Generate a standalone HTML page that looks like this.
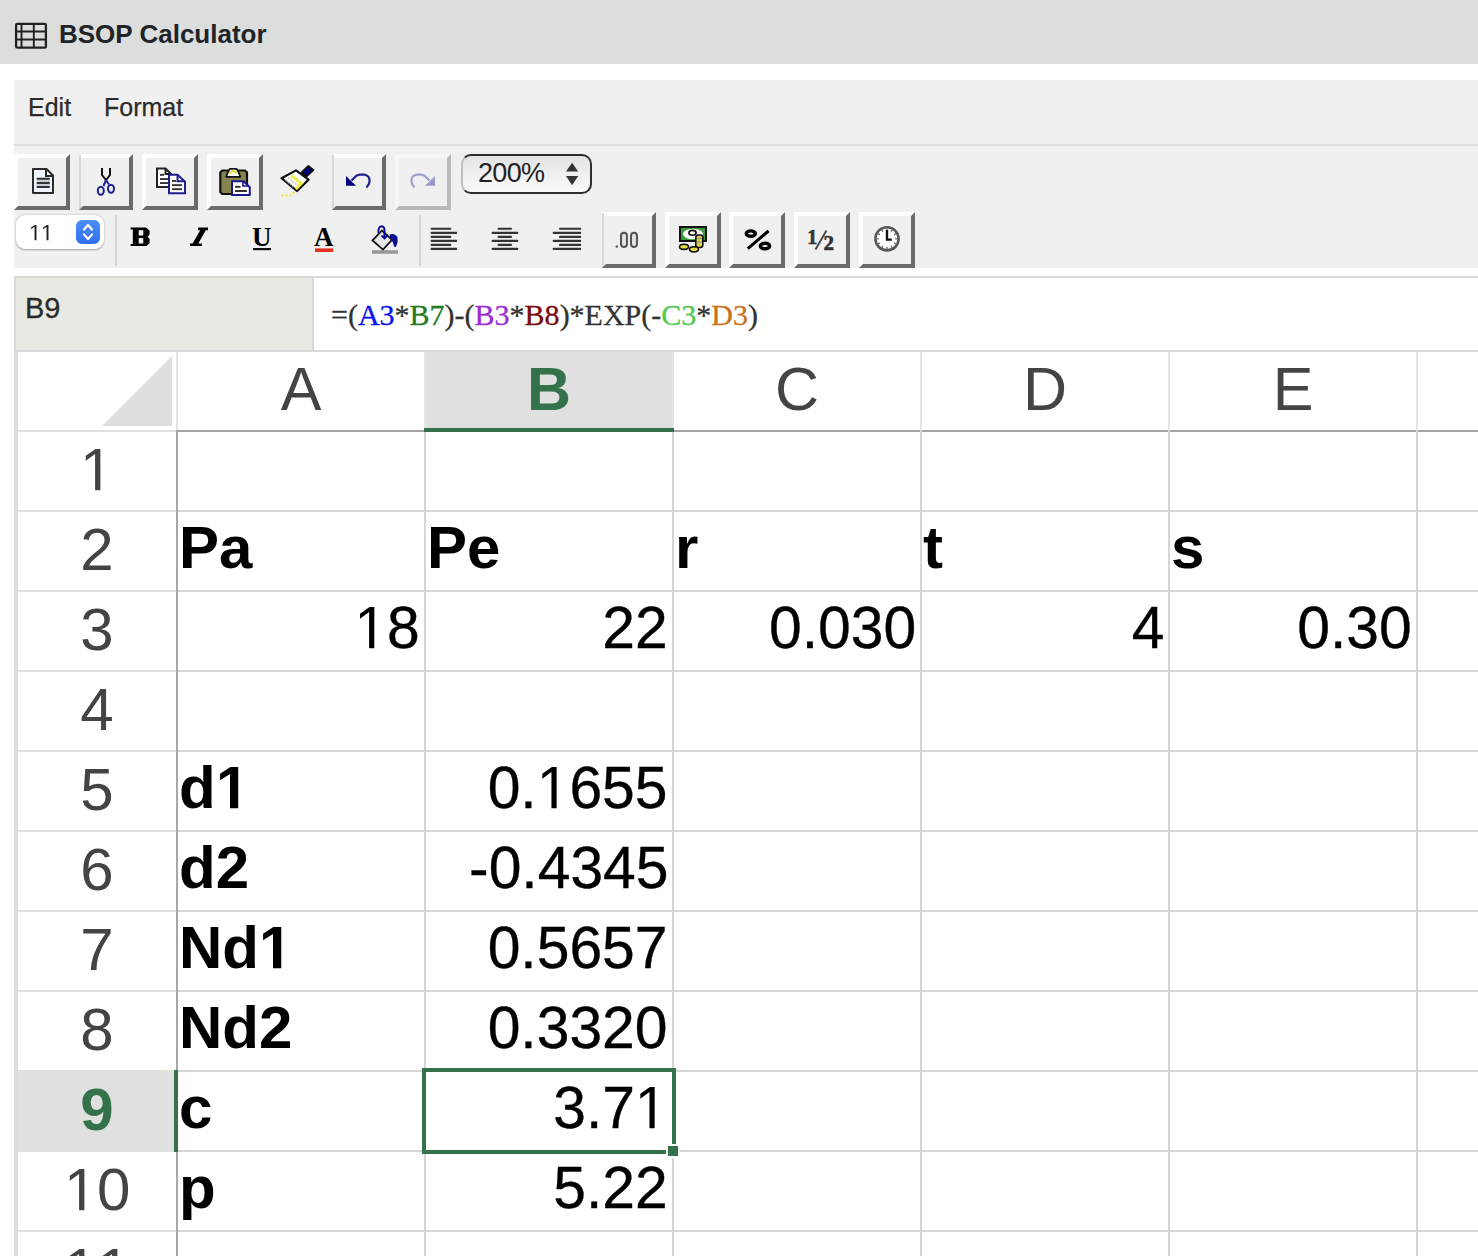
<!DOCTYPE html>
<html><head><meta charset="utf-8">
<style>
*{box-sizing:border-box;margin:0;padding:0}
html,body{width:1478px;height:1256px;overflow:hidden;background:#fff;font-family:"Liberation Sans",sans-serif;position:relative}
.abs{position:absolute}
svg.one{width:0.5562em;height:0.688em;vertical-align:baseline;fill:currentColor;overflow:visible}
#title{left:0;top:0;width:1478px;height:64px;background:#dcdedd}
#title .t{left:59px;top:19px;font-weight:bold;font-size:26px;color:#202327;white-space:nowrap;line-height:30px}
#menu{left:14px;top:80px;width:1464px;height:64px;background:#f0f0f0}
#menu .m{top:91px;font-size:25px;color:#2b2b2b;line-height:30px}
#menuline{left:14px;top:144px;width:1464px;height:2px;background:#dcdcdc}
#tool{left:14px;top:146px;width:1464px;height:122px;background:#f0f0f0}
.btn{position:absolute;width:56px;height:56px;border-style:solid;border-width:4px;border-color:#fff #6b6b6b #6b6b6b #fff;background:#f0f0f0}
.btn.dis{border-color:#fafafa #bdbdbd #bdbdbd #fafafa}
.sep{position:absolute;width:2px;background:#d6d6d6}
#fbar{left:14px;top:276px;width:1464px;height:76px;border:2px solid #d9d9d9;border-right:none;background:#fff}
#namebox{left:16px;top:278px;width:296px;height:72px;background:#e9e9e4}
#nameline{left:312px;top:278px;width:2px;height:72px;background:#d9d9d9}
.grid-h{position:absolute;height:2px}
.grid-v{position:absolute;width:2px}
.rl{position:absolute;left:18px;width:158px;height:78px;text-align:center;font-size:60px;color:#444;line-height:75px}
.cl{position:absolute;top:352px;height:78px;width:246px;text-align:center;font-size:61px;color:#444;line-height:74px}
.c{position:absolute;height:78px;width:246px;font-size:60px;color:#000;line-height:72px;white-space:nowrap;overflow:hidden}
.c span{display:inline-block}
.c.r{text-align:right;padding-right:4px}
.c.r span{transform:scaleX(0.98);transform-origin:100% 50%;-webkit-text-stroke:0.35px #000}
.c.b{font-weight:bold;padding-left:1px}
.c.b span{transform:none}
</style></head><body>
<div id="title" class="abs">
  <svg class="abs" style="left:14px;top:22px" width="34" height="28" viewBox="14 22 34 28">
    <rect x="16.1" y="23.8" width="29.8" height="23.8" rx="1.2" fill="none" stroke="#222" stroke-width="2.3"/>
    <path d="M21.5 24v23M33.8 24v23M16 31.5h30M16 39.5h30" stroke="#222" stroke-width="1.9" fill="none"/>
  </svg>
  <div class="abs t">BSOP Calculator</div>
</div>
<div id="menu" class="abs"></div>
<div class="abs m" style="left:28px;top:92px;font-size:25px;color:#2b2b2b;line-height:30px;-webkit-text-stroke:0.25px #2b2b2b">Edit</div>
<div class="abs m" style="left:104px;top:92px;font-size:25px;color:#2b2b2b;line-height:30px;-webkit-text-stroke:0.25px #2b2b2b">Format</div>
<div id="menuline" class="abs"></div>
<div id="tool" class="abs"></div>

<!-- toolbar -->
<svg class="abs" style="left:0;top:146px" width="1000" height="122" viewBox="0 146 1000 122">
<defs>
 <linearGradient id="bk" x1="0" y1="0" x2="1" y2="1"><stop offset="0" stop-color="#ffffff"/><stop offset="1" stop-color="#b8b8b8"/></linearGradient>
</defs>
<g id="btns">
<polygon points="14,154 70,154 66,158 18,158 18,206 14,210" fill="#ffffff"/>
<polygon points="70,154 70,210 14,210 18,206 66,206 66,158" fill="#6b6b6b"/>
<polygon points="79,154 133,154 129,158 81,158" fill="#ffffff"/>
<rect x="79" y="155" width="2" height="55" fill="#d8d8d8"/>
<polygon points="133,154 133,210 79,210 83,206 129,206 129,158" fill="#6b6b6b"/>
<polygon points="142,154 198,154 194,158 146,158 146,206 142,210" fill="#ffffff"/>
<polygon points="198,154 198,210 142,210 146,206 194,206 194,158" fill="#6b6b6b"/>
<polygon points="207,154 263,154 259,158 211,158 211,206 207,210" fill="#ffffff"/>
<polygon points="263,154 263,210 207,210 211,206 259,206 259,158" fill="#6b6b6b"/>
<polygon points="332,154 386,154 382,158 334,158" fill="#ffffff"/>
<rect x="332" y="155" width="2" height="55" fill="#d8d8d8"/>
<polygon points="386,154 386,210 332,210 336,206 382,206 382,158" fill="#6b6b6b"/>
<polygon points="395,154 451,154 447,158 399,158 399,206 395,210" fill="#f7f7f7"/>
<polygon points="451,154 451,210 395,210 399,206 447,206 447,158" fill="#b9b9b9"/>
<polygon points="602,212 656,212 652,216 604,216" fill="#ffffff"/>
<rect x="602" y="213" width="2" height="55" fill="#d8d8d8"/>
<polygon points="656,212 656,268 602,268 606,264 652,264 652,216" fill="#6b6b6b"/>
<polygon points="665,212 721,212 717,216 669,216 669,264 665,268" fill="#ffffff"/>
<polygon points="721,212 721,268 665,268 669,264 717,264 717,216" fill="#6b6b6b"/>
<polygon points="729,212 785,212 781,216 733,216 733,264 729,268" fill="#ffffff"/>
<polygon points="785,212 785,268 729,268 733,264 781,264 781,216" fill="#6b6b6b"/>
<polygon points="794,212 850,212 846,216 798,216 798,264 794,268" fill="#ffffff"/>
<polygon points="850,212 850,268 794,268 798,264 846,264 846,216" fill="#6b6b6b"/>
<polygon points="859,212 915,212 911,216 863,216 863,264 859,268" fill="#ffffff"/>
<polygon points="915,212 915,268 859,268 863,264 911,264 911,216" fill="#6b6b6b"/>
</g>
<!-- new doc -->
<path d="M33 169 H46.5 L53 175.5 V193 H33 Z" fill="#eef4fc" stroke="#2a2a2a" stroke-width="2" stroke-linejoin="round"/>
<path d="M46 169 V176 H53" fill="none" stroke="#2a2a2a" stroke-width="2"/>
<rect x="36.5" y="178" width="13.5" height="10" fill="#c8ced8"/>
<rect x="36.5" y="177.8" width="13.5" height="2" rx="1" fill="#333"/>
<rect x="36.5" y="181.9" width="13.5" height="2" rx="1" fill="#333"/>
<rect x="36.5" y="185.9" width="13.5" height="2" rx="1" fill="#333"/>
<!-- scissors -->
<path d="M102 168 V175 L106 180 L110 175 V168" fill="none" stroke="#111" stroke-width="2"/>
<path d="M106 180 L103.5 186 M106 180 L109 184.5" fill="none" stroke="#1e1e8f" stroke-width="2"/>
<ellipse cx="100.8" cy="190.8" rx="3" ry="4" fill="none" stroke="#1e1e8f" stroke-width="2"/>
<ellipse cx="111" cy="188.7" rx="3" ry="4" fill="none" stroke="#1e1e8f" stroke-width="2"/>
<!-- copy -->
<path d="M157 168.6 H165.5 L171 174 V187 H157 Z" fill="#fff" stroke="#222" stroke-width="2"/>
<path d="M165.5 168.6 V174 H171" fill="none" stroke="#222" stroke-width="2"/>
<rect x="160" y="173.9" width="4" height="1.9" fill="#333"/>
<rect x="160" y="178.1" width="8" height="1.9" fill="#333"/>
<rect x="160" y="182.1" width="8" height="1.9" fill="#333"/>
<path d="M169 174.8 H177.5 L185 181.8 V193.3 H169 Z" fill="#fff" stroke="#1e1e8f" stroke-width="2"/>
<path d="M177.5 174.8 V181.2 H185" fill="none" stroke="#1e1e8f" stroke-width="2"/>
<rect x="172" y="180" width="4" height="1.9" fill="#333"/>
<rect x="172" y="184.2" width="10" height="1.9" fill="#333"/>
<rect x="172" y="188.2" width="10" height="1.9" fill="#333"/>
<!-- paste -->
<path d="M222.3 170.5 H245 L247 172.5 V192 L245 194 H222.3 L220.3 192 V172.5 Z" fill="#86834f" stroke="#111" stroke-width="2.2"/>
<path d="M226.2 176.8 H240.3 L238.6 172.2 L236.6 168.9 H229.8 L227.9 172.2 Z" fill="#fff" stroke="#111" stroke-width="1.8" stroke-linejoin="round"/>
<path d="M229.8 173.6 L233.2 170.6 L236.6 173.6" fill="none" stroke="#e4dc30" stroke-width="2"/>


<path d="M232 181.3 H243.5 L249.8 187.3 V195 H232 Z" fill="#fff" stroke="#1a1a8c" stroke-width="2" stroke-linejoin="round"/>
<path d="M243 181.5 V186 H248" fill="none" stroke="#1a1a8c" stroke-width="1.6"/>
<rect x="235" y="185.8" width="5.5" height="2" fill="#333"/>
<rect x="235" y="190" width="12" height="2" fill="#333"/>
<!-- paintbrush -->
<polygon points="301.6,172.3 308.4,166 313.4,170 306.3,176.6" fill="#00007f" stroke="#111" stroke-width="1.8" stroke-linejoin="round"/>
<polygon points="281.5,178.2 296,170.4 308.6,179.6 297,191" fill="#fff" stroke="#111" stroke-width="2.2" stroke-linejoin="round"/>
<path d="M291.3 175.6 L301.2 183.4 L295.8 188.8" fill="none" stroke="#f0ee50" stroke-width="3.2"/>
<path d="M285.5 180.2 L294.5 187.8 M288.2 177.8 L297.2 185.2" stroke="#a8a8a8" stroke-width="1.3" stroke-dasharray="1.6 1.4"/>
<path d="M281.5 195.3 H291 L294.5 192" fill="none" stroke="#f0ec40" stroke-width="2.2" stroke-dasharray="2 2"/>
<!-- undo -->
<path d="M346 176 V185.7 H356 Z" fill="#00007f"/>
<path d="M351.5 180.5 L354.5 177.5 Q356.5 175 359.5 174.7 H365 Q369.3 176 369.5 180 V182 Q369 185 366.5 187.5" fill="none" stroke="#22228f" stroke-width="2.2"/>
<!-- redo -->
<g transform="translate(781 0) scale(-1 1)">
<path d="M346 176 V185.7 H356 Z" fill="#9898cc"/>
<path d="M351.5 180.5 L354.5 177.5 Q356.5 175 359.5 174.7 H365 Q369.3 176 369.5 180 V182 Q369 185 366.5 187.5" fill="none" stroke="#a0a0d0" stroke-width="2.2"/>
</g>
<!-- separators -->
<rect x="115" y="215" width="2" height="51" fill="#d4d4d4"/>
<rect x="419" y="215" width="2" height="51" fill="#d4d4d4"/>
<!-- B I U A -->
<path fill-rule="evenodd" fill="#000" d="M130.6 227.5 H146 L149.6 230.8 V234.6 L147.6 236.8 L149.6 239 V243 L146.6 246.1 H130.6 V244 H132.8 V229.6 H130.6 Z M138.7 230.3 H143.3 V235.6 H138.7 Z M138.7 238 H143.3 V243.5 H138.7 Z"/>
<path fill="#000" d="M198.2 227.6 H208 V230.2 H205.8 L198.3 243.6 H201.8 V246 H190 V243.6 H192.6 L200.2 230.2 H198.2 Z"/>
<text x="252" y="246" font-family="Liberation Serif" font-weight="bold" font-size="27" fill="#000">U</text>
<rect x="253" y="248" width="18" height="2.2" fill="#111"/>
<text x="314" y="246" font-family="Liberation Serif" font-weight="bold" font-size="27" fill="#000">A</text>
<rect x="315" y="248.4" width="18.2" height="3.6" fill="#e53020"/>
<!-- bucket -->
<rect x="372" y="250.2" width="26" height="3.6" fill="#9a9a9a"/>
<path d="M372.5 240.4 L382 230.5 L392 239.8 L383 249.6 Z" fill="#e8e8e8" stroke="#111" stroke-width="1.8"/>
<path d="M378.5 233 Q378 226.5 381.5 226.3 Q385 226.5 384.5 232 V238" fill="none" stroke="#0a0a90" stroke-width="2"/>
<path d="M381.5 235.5 L384.5 238.5 L387.5 235.5" fill="none" stroke="#0a0a90" stroke-width="1.8"/>
<path d="M389.5 234.5 Q395 233 397.5 237 Q398.5 242 396 247 L394 246.5 Q393 241 390.5 239 Z" fill="#0a0a90"/>
<!-- align -->
<g stroke="#333" stroke-width="2.1" stroke-linecap="round">
<path d="M431.6 228.8 H450.3 M431.6 232.9 H456.2 M431.6 236.9 H450.3 M431.6 240.9 H456.2 M431.6 244.9 H450.3 M431.6 248.9 H456.2"/>
<path d="M498.6 228.8 H511 M492.6 232.9 H517.3 M498.6 236.9 H511 M492.6 240.9 H517.3 M498.6 244.9 H511 M492.6 248.9 H517.3"/>
<path d="M560 228.8 H580.2 M553.7 232.9 H580.2 M560 236.9 H580.2 M553.7 240.9 H580.2 M560 244.9 H580.2 M553.7 248.9 H580.2"/>
</g>
<!-- .00 -->
<circle cx="616.8" cy="246.6" r="1.3" fill="#666"/>
<rect x="621" y="232.7" width="6" height="14.3" rx="3" fill="#e2e2dc" stroke="#555" stroke-width="2"/>
<rect x="631" y="232.7" width="6" height="14.3" rx="3" fill="#e2e2dc" stroke="#555" stroke-width="2"/>
<!-- money -->
<rect x="680" y="227" width="26" height="14" fill="#3a9a3a" stroke="#111" stroke-width="2"/>
<ellipse cx="693" cy="234" rx="10" ry="5.2" fill="#fff"/>
<ellipse cx="692.5" cy="232.8" rx="3.6" ry="2.4" fill="none" stroke="#111" stroke-width="1.6"/>
<rect x="695.8" y="235" width="7" height="12.5" rx="2.5" fill="#d8d050" stroke="#111" stroke-width="1.6"/>
<path d="M697 238.5 H701.5 M697 242 H701.5" stroke="#888" stroke-width="1.2"/>
<ellipse cx="684" cy="246.8" rx="4.5" ry="2.6" fill="#e4dc40" stroke="#111" stroke-width="1.6"/>
<ellipse cx="694" cy="249.3" rx="4.5" ry="2.6" fill="#e4dc40" stroke="#111" stroke-width="1.6"/>
<!-- percent -->
<ellipse cx="750.8" cy="233.6" rx="4.6" ry="2.7" fill="none" stroke="#000" stroke-width="3.4"/>
<ellipse cx="765" cy="246" rx="4.6" ry="2.7" fill="none" stroke="#000" stroke-width="3.4"/>
<path d="M747.8 248.6 L768.6 230.8" stroke="#000" stroke-width="3"/>
<!-- half -->
<text x="807.2" y="244.3" font-family="Liberation Serif" font-weight="bold" font-size="20" fill="#333" stroke="#333" stroke-width="0.6">1</text>
<path d="M815.5 249.5 L826.5 230.5" stroke="#444" stroke-width="1.9"/>
<text x="823.6" y="250.2" font-family="Liberation Serif" font-weight="bold" font-size="21" fill="#333" stroke="#333" stroke-width="0.6">2</text>
<!-- clock -->
<circle cx="887" cy="238.8" r="11.6" fill="#fff" stroke="#585858" stroke-width="2.6"/>
<path d="M895.20 238.80 L897.20 238.80 M894.10 242.90 L895.83 243.90 M891.10 245.90 L892.10 247.63 M887.00 247.00 L887.00 249.00 M882.90 245.90 L881.90 247.63 M879.90 242.90 L878.17 243.90 M878.80 238.80 L876.80 238.80 M879.90 234.70 L878.17 233.70 M882.90 231.70 L881.90 229.97 M887.00 230.60 L887.00 228.60 M891.10 231.70 L892.10 229.97 M894.10 234.70 L895.83 233.70 " stroke="#777" stroke-width="1.6"/>
<path d="M887 230 V239.6 H891.8" fill="none" stroke="#111" stroke-width="2.4"/>
</svg>
<!-- zoom select -->
<div class="abs" style="left:461px;top:154px;width:131px;height:40px;border-radius:10px;border:2px solid #2e2e2e;border-left-color:#bdbdbd;background:linear-gradient(#e4e4e4,#f0f0f0 55%,#fafafa)"></div>
<div class="abs" style="left:478px;top:158px;font-size:27px;line-height:30px;color:#222;white-space:nowrap;letter-spacing:-0.7px">200%</div>
<svg class="abs" style="left:560px;top:158px" width="24" height="32" viewBox="560 158 24 32"><path d="M566 171.5 L572.1 162.7 L578.2 171.5 Z M566 176 L572.1 185.3 L578.2 176 Z" fill="#333"/></svg>
<!-- font size select -->
<div class="abs" style="left:16px;top:215px;width:88px;height:34px;border-radius:9px;background:#fff;box-shadow:0 0.5px 2px rgba(0,0,0,.35)"></div>
<div class="abs" style="left:29px;top:220px;font-size:22px;line-height:26px;color:#222;-webkit-text-stroke:0.3px #222"><svg class="one" viewBox="0 0 1139 1409"><path transform="matrix(1 0 0 -1 0 1409)" d="M515 0V1237L197 1010V1180L530 1409H696V0Z"/></svg><svg class="one" viewBox="0 0 1139 1409"><path transform="matrix(1 0 0 -1 0 1409)" d="M515 0V1237L197 1010V1180L530 1409H696V0Z"/></svg></div>
<div class="abs" style="left:76px;top:220px;width:24px;height:24px;border-radius:6px;background:linear-gradient(#4b8ff6,#2f6ef0)"></div>
<svg class="abs" style="left:76px;top:220px" width="24" height="24" viewBox="76 220 24 24"><path d="M84 229.5 L88 225 L92 229.5 M84 234.5 L88 239 L92 234.5" fill="none" stroke="#fff" stroke-width="2.2" stroke-linecap="round" stroke-linejoin="round"/></svg>

<!-- formula bar -->
<div id="fbar" class="abs"></div>
<div id="namebox" class="abs"></div>
<div id="nameline" class="abs"></div>
<div class="abs" style="left:25px;top:292px;font-size:29px;color:#2b2b2b;line-height:32px;-webkit-text-stroke:0.3px #2b2b2b">B9</div>
<div id="formula" class="abs" style="left:331px;top:298px;font-family:'Liberation Serif',serif;font-size:30px;line-height:34px;color:#333;white-space:nowrap;-webkit-text-stroke:0.3px currentColor">=(<span style="color:#0a14f0">A3</span>*<span style="color:#257a1e">B7</span>)-(<span style="color:#9a2ed0">B3</span>*<span style="color:#780c0c">B8</span>)*EXP(-<span style="color:#4ec94e">C3</span>*<span style="color:#c8721e">D3</span>)</div>

<!-- grid -->
<div class="abs" style="left:14px;top:352px;width:4px;height:904px;background:#dcdcdc"></div>
<!-- selected header B -->
<div class="abs" style="left:424px;top:352px;width:250px;height:80px;background:#e0e0e0"></div>
<div class="abs" style="left:424px;top:428px;width:250px;height:4px;background:#33724a;z-index:2"></div>
<!-- selected row 9 header -->
<div class="abs" style="left:18px;top:1072px;width:158px;height:78px;background:#e0e0e0"></div>

<!-- corner triangle -->
<svg class="abs" style="left:102px;top:356px" width="70" height="70"><path d="M70 0V70H0Z" fill="#dedede"/></svg>

<div id="lines">
<div class="grid-h" style="left:18px;top:430px;width:158px;background:#dde2dc"></div>
<div class="grid-h" style="left:176px;top:430px;width:1302px;background:#a3a3a3"></div>
<div class="grid-h" style="left:18px;top:510px;width:158px;background:#dde2dc"></div>
<div class="grid-h" style="left:176px;top:510px;width:1302px;background:#d5d5d5"></div>
<div class="grid-h" style="left:18px;top:590px;width:158px;background:#dde2dc"></div>
<div class="grid-h" style="left:176px;top:590px;width:1302px;background:#d5d5d5"></div>
<div class="grid-h" style="left:18px;top:670px;width:158px;background:#dde2dc"></div>
<div class="grid-h" style="left:176px;top:670px;width:1302px;background:#d5d5d5"></div>
<div class="grid-h" style="left:18px;top:750px;width:158px;background:#dde2dc"></div>
<div class="grid-h" style="left:176px;top:750px;width:1302px;background:#d5d5d5"></div>
<div class="grid-h" style="left:18px;top:830px;width:158px;background:#dde2dc"></div>
<div class="grid-h" style="left:176px;top:830px;width:1302px;background:#d5d5d5"></div>
<div class="grid-h" style="left:18px;top:910px;width:158px;background:#dde2dc"></div>
<div class="grid-h" style="left:176px;top:910px;width:1302px;background:#d5d5d5"></div>
<div class="grid-h" style="left:18px;top:990px;width:158px;background:#dde2dc"></div>
<div class="grid-h" style="left:176px;top:990px;width:1302px;background:#d5d5d5"></div>
<div class="grid-h" style="left:18px;top:1070px;width:158px;background:#dde2dc"></div>
<div class="grid-h" style="left:176px;top:1070px;width:1302px;background:#d5d5d5"></div>
<div class="grid-h" style="left:18px;top:1150px;width:158px;background:#dde2dc"></div>
<div class="grid-h" style="left:176px;top:1150px;width:1302px;background:#d5d5d5"></div>
<div class="grid-h" style="left:18px;top:1230px;width:158px;background:#dde2dc"></div>
<div class="grid-h" style="left:176px;top:1230px;width:1302px;background:#d5d5d5"></div>
<div class="grid-v" style="left:176px;top:352px;height:78px;background:#e3e7e3"></div>
<div class="grid-v" style="left:176px;top:430px;height:826px;background:#a8a8a8"></div>
<div class="grid-v" style="left:424px;top:352px;height:78px;background:#e3e7e3"></div>
<div class="grid-v" style="left:424px;top:430px;height:826px;background:#d5d5d5"></div>
<div class="grid-v" style="left:672px;top:352px;height:78px;background:#e3e7e3"></div>
<div class="grid-v" style="left:672px;top:430px;height:826px;background:#d5d5d5"></div>
<div class="grid-v" style="left:920px;top:352px;height:78px;background:#e3e7e3"></div>
<div class="grid-v" style="left:920px;top:430px;height:826px;background:#d5d5d5"></div>
<div class="grid-v" style="left:1168px;top:352px;height:78px;background:#e3e7e3"></div>
<div class="grid-v" style="left:1168px;top:430px;height:826px;background:#d5d5d5"></div>
<div class="grid-v" style="left:1416px;top:352px;height:78px;background:#e3e7e3"></div>
<div class="grid-v" style="left:1416px;top:430px;height:826px;background:#d5d5d5"></div>
<div class="cl" style="left:178px;">A</div>
<div class="cl" style="left:426px;color:#33724a;font-weight:bold;">B</div>
<div class="cl" style="left:674px;">C</div>
<div class="cl" style="left:922px;">D</div>
<div class="cl" style="left:1170px;">E</div>
<div class="cl" style="left:1418px;">F</div>
<div class="rl" style="top:432px;"><svg class="one" viewBox="0 0 1139 1409"><path transform="matrix(1 0 0 -1 0 1409)" d="M515 0V1237L197 1010V1180L530 1409H696V0Z"/></svg></div>
<div class="rl" style="top:512px;">2</div>
<div class="rl" style="top:592px;">3</div>
<div class="rl" style="top:672px;">4</div>
<div class="rl" style="top:752px;">5</div>
<div class="rl" style="top:832px;">6</div>
<div class="rl" style="top:912px;">7</div>
<div class="rl" style="top:992px;">8</div>
<div class="rl" style="top:1072px;color:#33724a;font-weight:bold;">9</div>
<div class="rl" style="top:1152px;"><svg class="one" viewBox="0 0 1139 1409"><path transform="matrix(1 0 0 -1 0 1409)" d="M515 0V1237L197 1010V1180L530 1409H696V0Z"/></svg>0</div>
<div class="rl" style="top:1232px;"><svg class="one" viewBox="0 0 1139 1409"><path transform="matrix(1 0 0 -1 0 1409)" d="M515 0V1237L197 1010V1180L530 1409H696V0Z"/></svg><svg class="one" viewBox="0 0 1139 1409"><path transform="matrix(1 0 0 -1 0 1409)" d="M515 0V1237L197 1010V1180L530 1409H696V0Z"/></svg></div>
<div class="c b" style="left:178px;top:512px"><span>Pa</span></div>
<div class="c b" style="left:426px;top:512px"><span>Pe</span></div>
<div class="c b" style="left:674px;top:512px"><span>r</span></div>
<div class="c b" style="left:922px;top:512px"><span>t</span></div>
<div class="c b" style="left:1170px;top:512px"><span>s</span></div>
<div class="c r" style="left:178px;top:592px"><span><svg class="one" viewBox="0 0 1139 1409"><path transform="matrix(1 0 0 -1 0 1409)" d="M515 0V1237L197 1010V1180L530 1409H696V0Z"/></svg>8</span></div>
<div class="c r" style="left:426px;top:592px"><span>22</span></div>
<div class="c r" style="left:674px;top:592px"><span>0.030</span></div>
<div class="c r" style="left:922px;top:592px"><span>4</span></div>
<div class="c r" style="left:1170px;top:592px"><span>0.30</span></div>
<div class="c b" style="left:178px;top:752px"><span>d<svg class="one" viewBox="0 0 1139 1409"><path transform="matrix(1 0 0 -1 0 1409)" d="M478 0V1170L140 959V1180L493 1409H759V0Z"/></svg></span></div>
<div class="c r" style="left:426px;top:752px"><span>0.<svg class="one" viewBox="0 0 1139 1409"><path transform="matrix(1 0 0 -1 0 1409)" d="M515 0V1237L197 1010V1180L530 1409H696V0Z"/></svg>655</span></div>
<div class="c b" style="left:178px;top:832px"><span>d2</span></div>
<div class="c r" style="left:426px;top:832px"><span>-0.4345</span></div>
<div class="c b" style="left:178px;top:912px"><span>Nd<svg class="one" viewBox="0 0 1139 1409"><path transform="matrix(1 0 0 -1 0 1409)" d="M478 0V1170L140 959V1180L493 1409H759V0Z"/></svg></span></div>
<div class="c r" style="left:426px;top:912px"><span>0.5657</span></div>
<div class="c b" style="left:178px;top:992px"><span>Nd2</span></div>
<div class="c r" style="left:426px;top:992px"><span>0.3320</span></div>
<div class="c b" style="left:178px;top:1072px"><span>c</span></div>
<div class="c r" style="left:426px;top:1072px"><span>3.7<svg class="one" viewBox="0 0 1139 1409"><path transform="matrix(1 0 0 -1 0 1409)" d="M515 0V1237L197 1010V1180L530 1409H696V0Z"/></svg></span></div>
<div class="c b" style="left:178px;top:1152px"><span>p</span></div>
<div class="c r" style="left:426px;top:1152px"><span>5.22</span></div>
<div class="abs" style="left:422px;top:1068px;width:254px;height:86px;border:4px solid #35714a"></div>
<div class="abs" style="left:666px;top:1144px;width:14px;height:14px;background:#fff"></div>
<div class="abs" style="left:668px;top:1146px;width:10px;height:10px;background:#35714a"></div>
<div class="abs" style="left:174px;top:1070px;width:4px;height:82px;background:#35714a"></div>
</div>

</body></html>
